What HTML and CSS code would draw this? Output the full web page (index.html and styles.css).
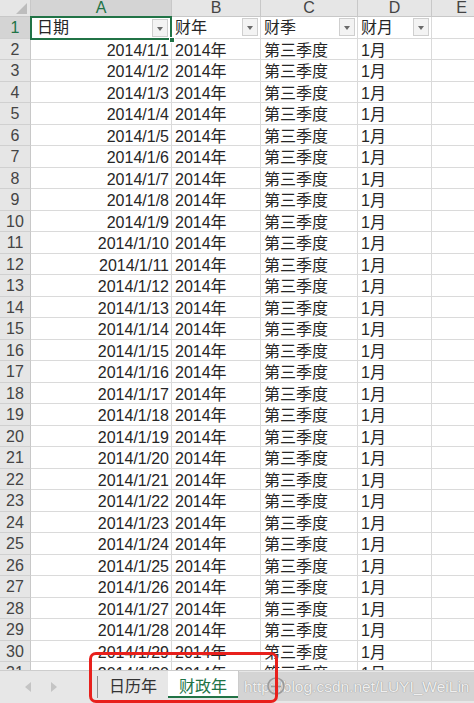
FILE: index.html
```html
<!DOCTYPE html>
<html lang="zh">
<head>
<meta charset="utf-8">
<link rel="stylesheet" href="styles.css">
</head>
<body>
<div class="app">
  <div class="sheet">
    <div class="corner"><span class="tri"></span></div>
    <div class="colh sel">A</div>
    <div class="colh">B</div>
    <div class="colh">C</div>
    <div class="colh">D</div>
    <div class="colh">E</div>

    <div class="rowh sel">1</div>
    <div class="cell hdr a1"><span>日期</span><span class="fbtn"></span><span class="handle"></span></div>
    <div class="cell hdr"><span>财年</span><span class="fbtn"></span></div>
    <div class="cell hdr"><span>财季</span><span class="fbtn"></span></div>
    <div class="cell hdr"><span>财月</span><span class="fbtn"></span></div>
    <div class="cell"></div>

    <div class="rowh">2</div><div class="cell num">2014/1/1</div><div class="cell">2014年</div><div class="cell">第三季度</div><div class="cell">1月</div><div class="cell"></div>
    <div class="rowh">3</div><div class="cell num">2014/1/2</div><div class="cell">2014年</div><div class="cell">第三季度</div><div class="cell">1月</div><div class="cell"></div>
    <div class="rowh">4</div><div class="cell num">2014/1/3</div><div class="cell">2014年</div><div class="cell">第三季度</div><div class="cell">1月</div><div class="cell"></div>
    <div class="rowh">5</div><div class="cell num">2014/1/4</div><div class="cell">2014年</div><div class="cell">第三季度</div><div class="cell">1月</div><div class="cell"></div>
    <div class="rowh">6</div><div class="cell num">2014/1/5</div><div class="cell">2014年</div><div class="cell">第三季度</div><div class="cell">1月</div><div class="cell"></div>
    <div class="rowh">7</div><div class="cell num">2014/1/6</div><div class="cell">2014年</div><div class="cell">第三季度</div><div class="cell">1月</div><div class="cell"></div>
    <div class="rowh">8</div><div class="cell num">2014/1/7</div><div class="cell">2014年</div><div class="cell">第三季度</div><div class="cell">1月</div><div class="cell"></div>
    <div class="rowh">9</div><div class="cell num">2014/1/8</div><div class="cell">2014年</div><div class="cell">第三季度</div><div class="cell">1月</div><div class="cell"></div>
    <div class="rowh">10</div><div class="cell num">2014/1/9</div><div class="cell">2014年</div><div class="cell">第三季度</div><div class="cell">1月</div><div class="cell"></div>
    <div class="rowh">11</div><div class="cell num">2014/1/10</div><div class="cell">2014年</div><div class="cell">第三季度</div><div class="cell">1月</div><div class="cell"></div>
    <div class="rowh">12</div><div class="cell num">2014/1/11</div><div class="cell">2014年</div><div class="cell">第三季度</div><div class="cell">1月</div><div class="cell"></div>
    <div class="rowh">13</div><div class="cell num">2014/1/12</div><div class="cell">2014年</div><div class="cell">第三季度</div><div class="cell">1月</div><div class="cell"></div>
    <div class="rowh">14</div><div class="cell num">2014/1/13</div><div class="cell">2014年</div><div class="cell">第三季度</div><div class="cell">1月</div><div class="cell"></div>
    <div class="rowh">15</div><div class="cell num">2014/1/14</div><div class="cell">2014年</div><div class="cell">第三季度</div><div class="cell">1月</div><div class="cell"></div>
    <div class="rowh">16</div><div class="cell num">2014/1/15</div><div class="cell">2014年</div><div class="cell">第三季度</div><div class="cell">1月</div><div class="cell"></div>
    <div class="rowh">17</div><div class="cell num">2014/1/16</div><div class="cell">2014年</div><div class="cell">第三季度</div><div class="cell">1月</div><div class="cell"></div>
    <div class="rowh">18</div><div class="cell num">2014/1/17</div><div class="cell">2014年</div><div class="cell">第三季度</div><div class="cell">1月</div><div class="cell"></div>
    <div class="rowh">19</div><div class="cell num">2014/1/18</div><div class="cell">2014年</div><div class="cell">第三季度</div><div class="cell">1月</div><div class="cell"></div>
    <div class="rowh">20</div><div class="cell num">2014/1/19</div><div class="cell">2014年</div><div class="cell">第三季度</div><div class="cell">1月</div><div class="cell"></div>
    <div class="rowh">21</div><div class="cell num">2014/1/20</div><div class="cell">2014年</div><div class="cell">第三季度</div><div class="cell">1月</div><div class="cell"></div>
    <div class="rowh">22</div><div class="cell num">2014/1/21</div><div class="cell">2014年</div><div class="cell">第三季度</div><div class="cell">1月</div><div class="cell"></div>
    <div class="rowh">23</div><div class="cell num">2014/1/22</div><div class="cell">2014年</div><div class="cell">第三季度</div><div class="cell">1月</div><div class="cell"></div>
    <div class="rowh">24</div><div class="cell num">2014/1/23</div><div class="cell">2014年</div><div class="cell">第三季度</div><div class="cell">1月</div><div class="cell"></div>
    <div class="rowh">25</div><div class="cell num">2014/1/24</div><div class="cell">2014年</div><div class="cell">第三季度</div><div class="cell">1月</div><div class="cell"></div>
    <div class="rowh">26</div><div class="cell num">2014/1/25</div><div class="cell">2014年</div><div class="cell">第三季度</div><div class="cell">1月</div><div class="cell"></div>
    <div class="rowh">27</div><div class="cell num">2014/1/26</div><div class="cell">2014年</div><div class="cell">第三季度</div><div class="cell">1月</div><div class="cell"></div>
    <div class="rowh">28</div><div class="cell num">2014/1/27</div><div class="cell">2014年</div><div class="cell">第三季度</div><div class="cell">1月</div><div class="cell"></div>
    <div class="rowh">29</div><div class="cell num">2014/1/28</div><div class="cell">2014年</div><div class="cell">第三季度</div><div class="cell">1月</div><div class="cell"></div>
    <div class="rowh">30</div><div class="cell num">2014/1/29</div><div class="cell">2014年</div><div class="cell">第三季度</div><div class="cell">1月</div><div class="cell"></div>
    <div class="rowh">31</div><div class="cell num">2014/1/30</div><div class="cell">2014年</div><div class="cell">第三季度</div><div class="cell">1月</div><div class="cell"></div>
  </div>

  <div class="tabbar">
    <div class="nav">
      <span class="arrow left"></span>
      <span class="arrow right"></span>
    </div>
    <div class="tabs">
      <div class="tab">日历年</div>
      <div class="tab active">财政年</div>
    </div>
    <div class="watermark">
      <svg class="wm-icon" width="20" height="20" viewBox="0 0 20 20"><circle cx="10" cy="10" r="8" fill="none" stroke="#9a9a9a" stroke-width="1.6"/><path d="M5 10.5 H15" stroke="#9a9a9a" stroke-width="1.6"/></svg>
      <span class="wm-text">http://blog.csdn.net/LUYI_WeiLin</span>
    </div>
  </div>

  <div class="redbox"></div>
</div>
</body>
</html>
```

FILE: styles.css
```css
* { box-sizing: border-box; }
html, body { margin: 0; padding: 0; background: #fff; }
body {
  width: 474px;
  height: 703px;
  overflow: hidden;
  font-family: "Liberation Sans", "Noto Sans CJK SC", sans-serif;
  font-size: 16px;
  color: #262626;
}
.app {
  position: relative;
  width: 474px;
  height: 703px;
  display: flex;
  flex-direction: column;
}
.sheet {
  height: 670px;
  overflow: hidden;
  display: grid;
  grid-template-columns: 31px 141px 89px 97px 74px 60px;
  grid-template-rows: 17px repeat(31, 21.5px);
}
.corner {
  background: #e6e6e6;
  border-right: 1px solid #c8c8c8;
  border-bottom: 1px solid #c8c8c8;
  position: relative;
}
.corner .tri {
  position: absolute;
  right: 3px;
  bottom: 2px;
  width: 0; height: 0;
  border-left: 11px solid transparent;
  border-bottom: 11px solid #bdbdbd;
}
.colh {
  background: #e6e6e6;
  border-right: 1px solid #c8c8c8;
  border-bottom: 1px solid #c8c8c8;
  color: #444;
  text-align: center;
  line-height: 16px;
  font-size: 16px;
}
.colh.sel { background: #d4d4d4; color: #217346; border-bottom: 1px solid #217346; }
.rowh {
  background: #e6e6e6;
  border-right: 1px solid #c8c8c8;
  border-bottom: 1px solid #d0d0d0;
  color: #444;
  text-align: center;
  line-height: 22px;
  font-size: 16px;
}
.rowh.sel { background: #d4d4d4; color: #217346; border-right: 1px solid #217346; }
.cell {
  border-right: 1px solid #dadada;
  border-bottom: 1px solid #dadada;
  padding: 0 2px 0 3px;
  line-height: 23px;
  white-space: nowrap;
  overflow: hidden;
}
.cell.num { text-align: right; padding-right: 2px; }
.cell.hdr {
  display: flex;
  align-items: center;
  justify-content: space-between;
  line-height: 20px;
  overflow: visible;
  position: relative;
}
.cell.hdr span:first-child { padding-top: 1px; }
.cell.a1 {
  border: 2px solid #217346;
  margin: -1px 0 -1px -1px;
  padding-left: 5px;
  z-index: 2;
}
.fbtn {
  width: 16px;
  height: 18px;
  background: #f3f3f3;
  border: 1px solid #cfcfcf;
  position: relative;
  flex: none;
}
.fbtn::after {
  content: "";
  position: absolute;
  left: 4px;
  top: 7px;
  border-left: 3.5px solid transparent;
  border-right: 3.5px solid transparent;
  border-top: 4px solid #6a6a6a;
}
.handle {
  position: absolute;
  right: -5px;
  bottom: -5px;
  width: 6px;
  height: 6px;
  background: #217346;
  border: 1px solid #fff;
}
.tabbar {
  height: 33px;
  background: #e7e7e7;
  border-top: 1px solid #cdcdcd;
  display: flex;
  align-items: stretch;
  position: relative;
}
.nav {
  width: 97px;
  display: flex;
  align-items: center;
  padding-left: 25px;
  gap: 20px;
}
.arrow {
  width: 0; height: 0;
  border-top: 5px solid transparent;
  border-bottom: 5px solid transparent;
}
.arrow.left { border-right: 6px solid #c4c4c4; }
.arrow.right { border-left: 6px solid #c4c4c4; }
.tabs {
  display: flex;
  border-left: 1px solid #8e8e8e;
  margin: 5px 0 0 0;
  height: 22px;
  align-self: flex-start;
}
.tabs .tab {
  width: 70px;
  text-align: center;
  font-family: "Noto Sans CJK SC", sans-serif;
  font-size: 16px;
  color: #333;
  line-height: 22px;
  margin-top: -5px;
  padding-top: 3px;
}
.tabs .tab.active {
  background: #fff;
  color: #217346;
  height: 27px;
  border-bottom: 2px solid #217346;
  box-shadow: 1px 0 0 #c8c8c8;
}
.watermark {
  position: absolute;
  left: 238px;
  top: 1px;
  width: 236px;
  height: 29px;
  background: rgba(205,205,205,0.75);
  display: flex;
  align-items: center;
  padding-left: 6px;
  overflow: hidden;
}
.wm-icon { position: absolute; left: 28px; top: 4px; }
.wm-text {
  font-family: "Liberation Sans", sans-serif;
  font-size: 15.5px;
  color: #efefef;
  text-shadow: 0 0 1px #9a9a9a, 0 0 1px #9a9a9a;
  white-space: nowrap;
}
.redbox {
  position: absolute;
  left: 89px;
  top: 652px;
  width: 189px;
  height: 51px;
  border: 3px solid #e8201c;
  border-radius: 7px;
  pointer-events: none;
}
```
